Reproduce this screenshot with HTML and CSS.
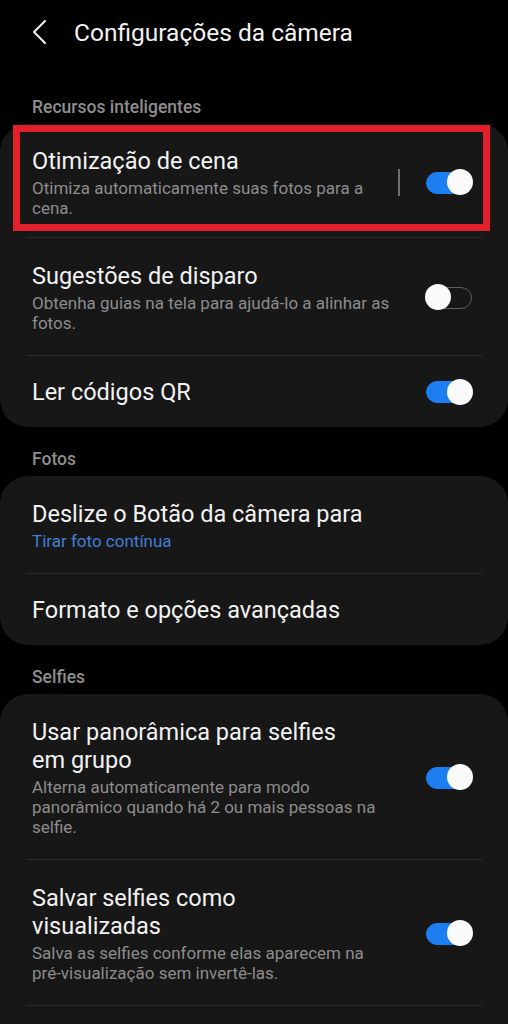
FILE: index.html
```html
<!DOCTYPE html>
<html lang="pt">
<head>
  <meta charset="UTF-8" />
  <meta name="viewport" content="width=device-width, initial-scale=1.0" />
  <title>Configurações da câmera</title>
  <link rel="stylesheet" href="styles.css">
</head>
<body>
  <header class="topbar">
    <svg class="back" width="24" height="28" viewBox="0 0 24 28">
      <path d="M17 3 L6 14 L17 25" fill="none" stroke="#f2f2f2" stroke-width="2" stroke-linecap="round" stroke-linejoin="round"/>
    </svg>
    <h1>Configurações da câmera</h1>
  </header>

  <h2 class="label first">Recursos inteligentes</h2>
  <section class="card">
    <div class="row marked">
      <div class="text">
        <div class="title">Otimização de cena</div>
        <div class="sub">Otimiza automaticamente suas fotos para a cena.</div>
      </div>
      <span class="vline"></span>
      <span class="switch on"></span>
      <span class="highlight"></span>
    </div>
    <div class="row">
      <div class="text">
        <div class="title">Sugestões de disparo</div>
        <div class="sub">Obtenha guias na tela para ajudá-lo a alinhar as fotos.</div>
      </div>
      <span class="switch"></span>
    </div>
    <div class="row single">
      <div class="text">
        <div class="title">Ler códigos QR</div>
      </div>
      <span class="switch on"></span>
    </div>
  </section>

  <h2 class="label">Fotos</h2>
  <section class="card">
    <div class="row">
      <div class="text">
        <div class="title">Deslize o Botão da câmera para</div>
        <div class="sub link">Tirar foto contínua</div>
      </div>
    </div>
    <div class="row single">
      <div class="text">
        <div class="title">Formato e opções avançadas</div>
      </div>
    </div>
  </section>

  <h2 class="label">Selfies</h2>
  <section class="card">
    <div class="row">
      <div class="text narrow">
        <div class="title">Usar panorâmica para selfies em grupo</div>
        <div class="sub">Alterna automaticamente para modo panorâmico quando há 2 ou mais pessoas na selfie.</div>
      </div>
      <span class="switch on"></span>
    </div>
    <div class="row">
      <div class="text narrow">
        <div class="title">Salvar selfies como visualizadas</div>
        <div class="sub">Salva as selfies conforme elas aparecem na <span class="nowrap">pré-visualização</span> sem invertê-las.</div>
      </div>
      <span class="switch on"></span>
    </div>
    <div class="row single">
      <div class="text">
        <div class="title">&nbsp;</div>
      </div>
    </div>
  </section>
</body>
</html>
```

FILE: styles.css
```css
body {
  margin: 0;
  background: #000;
  color: #f2f2f2;
  font-family: Roboto, "Noto Sans", sans-serif;
  overflow: hidden;
}
.topbar {
  height: 64px;
  display: flex;
  align-items: center;
  padding-left: 28px;
}
.back {
  margin-right: 22px;
}
.topbar h1 {
  margin: 0;
  font-size: 24.5px;
  font-weight: 400;
}
.label {
  margin: 22px 0 7px;
  padding: 0 32px;
  font-size: 17.5px;
  line-height: 20px;
  font-weight: 500;
  color: #8e8e8e;
}
.label.first {
  margin-top: 33px;
}
.card {
  background: #171717;
  border-radius: 28px;
  padding: 0 26px;
}
.row {
  display: flex;
  align-items: center;
  padding: 24px 10px 22px 6px;
  border-bottom: 1px solid #2b2b2b;
}
.row:last-child {
  border-bottom: none;
}
.row.single {
  padding: 22px 10px 21px 6px;
}
.text {
  flex: 1;
  padding-right: 24px;
}
.text.narrow .title {
  max-width: 325px;
}
.title {
  font-size: 23.5px;
  line-height: 28px;
}
.sub {
  margin-top: 3px;
  font-size: 17px;
  line-height: 20px;
  color: #8c8c8c;
}
.sub.link {
  color: #3f7fd6;
}
.nowrap {
  white-space: nowrap;
}
.marked {
  position: relative;
  padding-top: 23px;
  padding-bottom: 19px;
}
.marked .text {
  padding-right: 20px;
}
.highlight {
  position: absolute;
  left: -13px;
  right: -8px;
  top: 1px;
  bottom: 6px;
  border: 7px solid #e2202b;
  pointer-events: none;
}
.vline {
  width: 2px;
  height: 27px;
  background: #6f6f6f;
  margin-right: 26px;
}
.switch {
  position: relative;
  flex: none;
  width: 46px;
  height: 22px;
  border-radius: 11px;
  border: 1.5px solid #5c5c5c;
  box-sizing: border-box;
}
.switch::after {
  content: "";
  position: absolute;
  top: -3.5px;
  left: -2px;
  width: 26px;
  height: 26px;
  border-radius: 50%;
  background: #fafafa;
}
.switch.on {
  background: #1d7ef2;
  border-color: #1d7ef2;
}
.switch.on::after {
  left: auto;
  right: -2px;
}
```
